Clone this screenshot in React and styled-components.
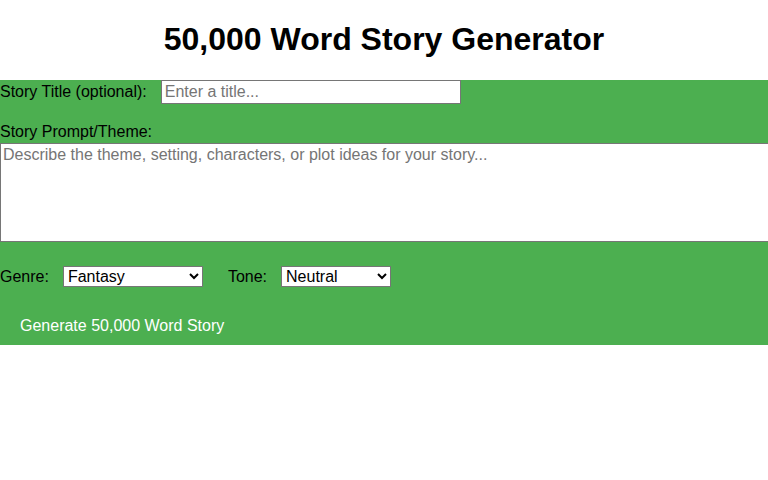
import React from 'react';
import styled, { createGlobalStyle } from 'styled-components';

const GlobalStyle = createGlobalStyle`
  body {
    margin: 0;
    background: #fff;
    font-family: "Liberation Sans", Arial, sans-serif;
    font-size: 16px;
    color: #000;
  }
`;

const Heading = styled.h1`
  margin: 0;
  padding: 21px 0 22px;
  text-align: center;
  font-size: 32px;
  font-weight: bold;
  line-height: 37px;
`;

const Form = styled.div`
  background: #4caf50;
  overflow: hidden;
`;

const Row = styled.div`
  display: flex;
  align-items: center;
  height: ${(p) => p.height || 24}px;
  margin-top: ${(p) => p.top || 0}px;
`;

const Label = styled.label`
  line-height: 18px;
  margin-left: ${(p) => p.left || 0}px;
  margin-right: 14px;
`;

const BlockLabel = styled.label`
  display: block;
  line-height: 18px;
  margin-top: 19px;
`;

const TextInput = styled.input`
  box-sizing: border-box;
  width: 300px;
  height: 24px;
  padding: 1px 3px;
  border: 1px solid #767676;
  font: 16px "Liberation Sans", Arial, sans-serif;
  &::placeholder {
    color: #757575;
  }
`;

const TextArea = styled.textarea`
  display: block;
  box-sizing: border-box;
  width: calc(100% + 10px);
  height: 99px;
  margin-top: 2px;
  padding: 2px;
  border: 1px solid #767676;
  resize: none;
  font: 16px "Liberation Sans", Arial, sans-serif;
  &::placeholder {
    color: #757575;
  }
`;

const Select = styled.select`
  box-sizing: border-box;
  width: ${(p) => p.width}px;
  height: 21px;
  border: 1px solid #767676;
  background: #fff;
  font: 16px "Liberation Sans", Arial, sans-serif;
  color: #000;
`;

const Button = styled.button`
  display: block;
  margin-top: 20px;
  padding: 10px 20px;
  border: none;
  background: #4caf50;
  color: #fff;
  font: 16px "Liberation Sans", Arial, sans-serif;
  line-height: 18px;
  cursor: pointer;
`;

export default function App() {
  return (
    <>
      <GlobalStyle />
      <Heading>50,000 Word Story Generator</Heading>
      <Form>
        <Row>
          <Label htmlFor="title">Story Title (optional):</Label>
          <TextInput id="title" type="text" placeholder="Enter a title..." />
        </Row>
        <BlockLabel htmlFor="prompt">Story Prompt/Theme:</BlockLabel>
        <TextArea
          id="prompt"
          placeholder="Describe the theme, setting, characters, or plot ideas for your story..."
        />
        <Row top={24} height={21}>
          <Label htmlFor="genre">Genre:</Label>
          <Select id="genre" width={140} defaultValue="fantasy">
            <option value="fantasy">Fantasy</option>
            <option value="scifi">Science Fiction</option>
            <option value="mystery">Mystery</option>
            <option value="romance">Romance</option>
            <option value="horror">Horror</option>
          </Select>
          <Label htmlFor="tone" left={25}>Tone:</Label>
          <Select id="tone" width={110} defaultValue="neutral">
            <option value="neutral">Neutral</option>
            <option value="dark">Dark</option>
            <option value="lighthearted">Lighthearted</option>
          </Select>
        </Row>
        <Button type="button">Generate 50,000 Word Story</Button>
      </Form>
    </>
  );
}
